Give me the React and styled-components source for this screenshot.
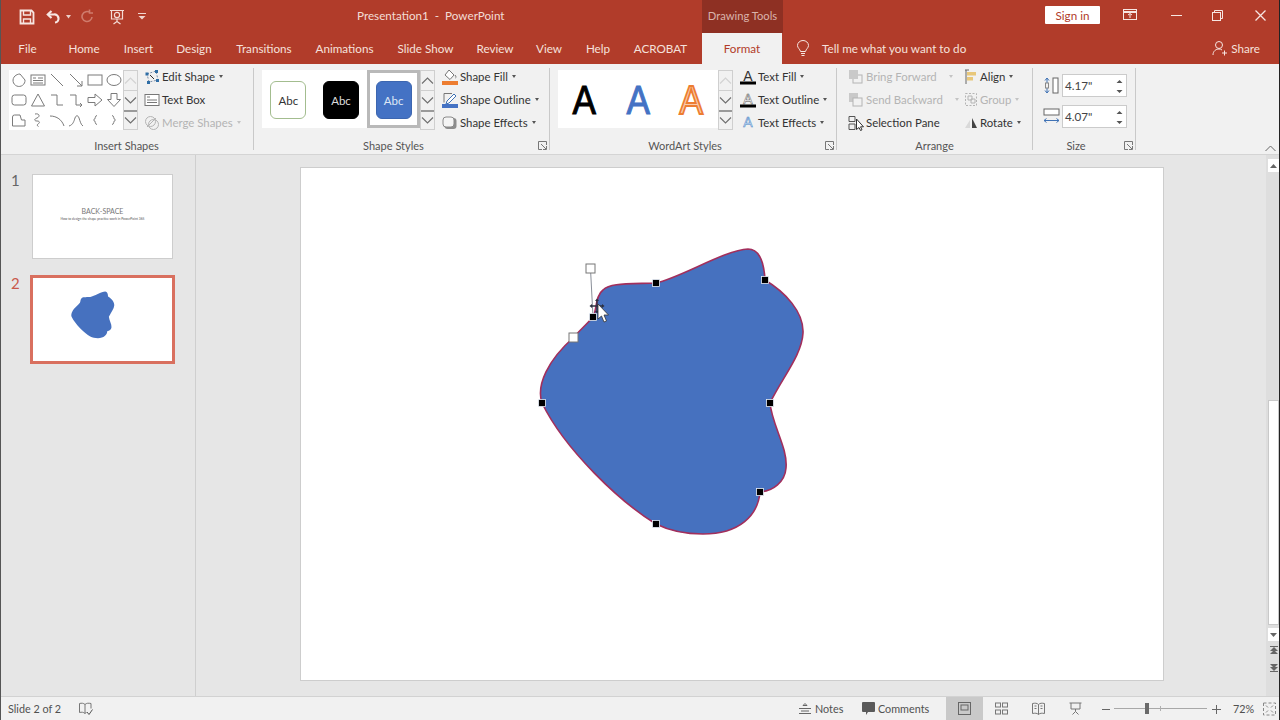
import React from "react";
import styled, { createGlobalStyle } from "styled-components";

const RED = "#B13C2A";
const INK = "#444444";
const FAINT = "#B4B4B4";

const BLOB =
  "M593 317 C597 310 595 296 603 290 C610 283 625 284 656 283 C680 278 725 250 748 249 C760 249 764 262 765 280 C785 292 804 312 803 333 C802 355 782 378 770 403 C772 425 788 448 786 468 C785 482 773 491 760 492 C758 515 740 534 703 534 C685 534 670 531 656 524 C620 502 565 450 542 403 C536 385 548 360 574 337 C580 330 587 324 593 317 Z";

const Global = createGlobalStyle`
  html, body { margin: 0; padding: 0; background: #e6e6e6; }
  * { box-sizing: border-box; }
`;

const Window = styled.div`
  position: relative;
  width: 1280px;
  height: 720px;
  overflow: hidden;
  display: flex;
  flex-direction: column;
  font-family: "Lato", "Open Sans", sans-serif;
  font-size: 11.7px;
  color: ${INK};
  &::after {
    content: "";
    position: absolute;
    inset: 0;
    border-left: 1px solid #555;
    border-right: 1px solid #222;
    pointer-events: none;
  }
`;

const Ico = styled.svg`
  display: block;
  flex: none;
  margin-left: ${(p) => p.$ml || 0}px;
`;

/* title bar */
const TitleBar = styled.div`
  display: flex;
  align-items: stretch;
  height: 33px;
  background: ${RED};
  color: #f3dcd6;
`;

const Quick = styled.div`
  display: flex;
  align-items: center;
  width: 357px;
  padding-left: 19px;
`;

const DocTitle = styled.div`
  width: 345px;
  display: flex;
  align-items: center;
  white-space: pre;
  padding-bottom: 3px;
`;

const ContextLabel = styled.div`
  width: 81px;
  display: flex;
  align-items: center;
  justify-content: center;
  background: #8e3023;
  color: #d9b3ab;
  font-size: 11.2px;
  padding-bottom: 3px;
`;

const SignIn = styled.div`
  align-self: flex-start;
  margin: 6px 0 0 auto;
  width: 55px;
  height: 18px;
  background: #fff;
  color: ${RED};
  display: flex;
  align-items: center;
  justify-content: center;
  border-radius: 1px;
`;

const WinButton = styled.div`
  width: ${(p) => p.$w}px;
  display: flex;
  align-items: center;
  justify-content: center;
  padding-bottom: 3px;
`;

const WinEnd = styled.div`
  width: 2px;
`;

/* tabs */
const TabBar = styled.div`
  display: flex;
  align-items: stretch;
  height: 31px;
  background: ${RED};
  color: #f5e1dc;
`;

const Tab = styled.div`
  width: ${(p) => p.$w}px;
  display: flex;
  align-items: center;
  justify-content: center;
  padding-bottom: 1px;
`;

const ActiveTab = styled(Tab)`
  margin-left: 3px;
  background: #f1f1f1;
  color: ${RED};
`;

const TellMe = styled.div`
  display: flex;
  align-items: center;
  margin-left: 14px;
  gap: 12px;
  padding-bottom: 1px;
`;

const ShareButton = styled.div`
  display: flex;
  align-items: center;
  gap: 3px;
  margin-left: auto;
  padding: 0 20px 1px 0;
`;

/* ribbon */
const Ribbon = styled.div`
  position: relative;
  display: flex;
  height: 91px;
  padding-top: 1px;
  background: #f1f1f1;
  border-bottom: 1px solid #d4d4d4;
`;

const Group = styled.div`
  width: ${(p) => p.$w}px;
  display: flex;
  flex-direction: column;
`;

const GroupBody = styled.div`
  display: flex;
  align-items: flex-start;
  height: 71px;
  flex: none;
  padding-left: ${(p) => p.$pl}px;
`;

const GroupLabel = styled.div`
  position: relative;
  height: 18px;
  flex: none;
  display: flex;
  align-items: center;
  justify-content: center;
  padding-right: ${(p) => (p.$launcher ? 16 : 0)}px;
  font-size: 11px;
  color: #555;
`;

const Launcher = styled.svg`
  position: absolute;
  right: 2px;
  top: 5px;
`;

const Separator = styled.div`
  width: 1px;
  margin: 3px 0 4px;
  background: #c9c9c9;
`;

const Gallery = styled.div`
  width: ${(p) => p.$w}px;
  height: ${(p) => p.$h}px;
  margin-top: 5px;
  background: #fff;
  display: grid;
  grid-template-columns: repeat(${(p) => p.$cols}, 1fr);
  grid-auto-rows: 1fr;
`;

const Cell = styled.div`
  display: flex;
  align-items: center;
  justify-content: center;
`;

const StyleCell = styled(Cell)`
  border: ${(p) => (p.$picked ? "3px solid #b9b9b9" : "none")};
`;

const Swatch = styled.div`
  width: 36px;
  height: 38px;
  border-radius: 6px;
  display: flex;
  align-items: center;
  justify-content: center;
  font-size: 11.500px;
  margin-top: 2px;
  background: ${(p) => p.$bg};
  color: ${(p) => p.$fg};
  border: 1.500px solid ${(p) => p.$line};
`;

const Letter = styled.div`
  font-family: "Liberation Sans", sans-serif;
  font-size: 40px;
  line-height: 1;
  margin-top: 2px;
  transform: scaleX(0.88);
  color: ${(p) => p.$fill};
  -webkit-text-stroke: ${(p) => p.$stroke || "1px currentColor"};
`;

const Spinner = styled.div`
  width: 15px;
  height: 60px;
  margin-top: 5px;
  display: grid;
  grid-auto-rows: 1fr;
  border: 1px solid #cfcfcf;
  background: #f1f1f1;
`;

const SpinCell = styled.div`
  display: flex;
  align-items: center;
  justify-content: center;
  border-top: ${(p) => (p.$rule ? "2px solid #9a9a9a" : p.$split ? "1px solid #cfcfcf" : "none")};
`;

const Commands = styled.div`
  display: flex;
  flex-direction: column;
  width: ${(p) => (p.$w ? `${p.$w}px` : "auto")};
  margin-left: ${(p) => p.$ml || 0}px;
`;

const Command = styled.div`
  display: flex;
  align-items: center;
  height: 23px;
  gap: 2px;
  font-size: 11.4px;
  white-space: nowrap;
  color: ${(p) => (p.$off ? FAINT : "#333")};
`;

const Caret = styled.span`
  width: 0;
  height: 0;
  margin-left: ${(p) => p.$ml || 2}px;
  border-left: 2.500px solid transparent;
  border-right: 2.500px solid transparent;
  border-top: 3px solid ${(p) => (p.$off ? "#c4c4c4" : "#555")};
`;

const SizeRows = styled.div`
  display: flex;
  flex-direction: column;
  gap: 8px;
  margin-top: 9px;
`;

const SizeRow = styled.div`
  display: flex;
  align-items: center;
  gap: 2px;
`;

const SizeInput = styled.div`
  position: relative;
  width: 65px;
  height: 23px;
  border: 1px solid #cbcbcb;
  background: #fff;
  display: flex;
  align-items: center;
  padding: 0 0 1px 2px;
`;

const SpinButtons = styled.svg`
  position: absolute;
  right: 3px;
  top: 5px;
`;

const Collapse = styled.svg`
  position: absolute;
  right: 4px;
  bottom: 2px;
`;

/* slides */
const Body = styled.div`
  flex: 1;
  min-height: 0;
  display: flex;
  background: #e6e6e6;
`;

const Thumbs = styled.div`
  width: 196px;
  padding-top: 20px;
  border-right: 1px solid #cfcfcf;
  display: flex;
  flex-direction: column;
  gap: 20px;
`;

const ThumbRow = styled.div`
  display: flex;
  padding-left: 11px;
`;

const ThumbNumber = styled.div`
  width: 22px;
  font-size: 15px;
  line-height: 10px;
  color: ${(p) => (p.$on ? "#c9584b" : "#666")};
`;

const Thumb = styled.div`
  position: relative;
  width: 139px;
  height: 83px;
  background: #fff;
  outline: ${(p) => (p.$on ? "3px solid #d9705f" : "1px solid #cdcdcd")};
  display: flex;
  flex-direction: column;
  align-items: center;
  padding-top: 32px;
`;

const ThumbTitle = styled.div`
  font-size: 7px;
  line-height: 9px;
  color: #777;
`;

const ThumbSub = styled.div`
  font-size: 3.300px;
  line-height: 6px;
  color: #555;
  white-space: nowrap;
`;

const ThumbArt = styled.svg`
  position: absolute;
  inset: 0;
  width: 100%;
  height: 100%;
`;

const Workspace = styled.div`
  flex: 1;
  display: flex;
  justify-content: center;
  padding: 13px 0 0 2px;
`;

const Slide = styled.div`
  width: 862px;
  height: 512px;
  background: #fff;
  outline: 1px solid #cdcdcd;
`;

const SlideArt = styled.svg`
  display: block;
  width: 100%;
  height: 100%;
`;

const ScrollBar = styled.div`
  width: 14px;
  padding: 4px 1px 0 2px;
  display: flex;
  flex-direction: column;
  background: #dedede;
`;

const ScrollEnd = styled.div`
  height: ${(p) => p.$h}px;
  background: ${(p) => (p.$plain ? "transparent" : "#fff")};
  display: flex;
  align-items: center;
  justify-content: center;
  flex: none;
`;

const ScrollTrack = styled.div`
  flex: none;
  height: 456px;
  display: flex;
  flex-direction: column;
  justify-content: flex-end;
  padding-bottom: 3px;
`;

const ScrollThumb = styled.div`
  height: 225px;
  background: #fff;
  border: 1px solid #c9c9c9;
`;

/* status bar */
const StatusBar = styled.div`
  display: flex;
  align-items: center;
  height: 24px;
  background: #f1f1f1;
  border-top: 1px solid #d2d2d2;
  padding-left: 8px;
  font-size: 10.8px;
  color: #505050;
`;

const StatusRight = styled.div`
  display: flex;
  align-items: stretch;
  height: 100%;
  margin-left: auto;
  width: 481px;
`;

const StatusItem = styled.div`
  display: flex;
  align-items: center;
  flex: none;
  white-space: nowrap;
  gap: ${(p) => p.$gap || 4}px;
  width: ${(p) => p.$w}px;
  margin-left: ${(p) => p.$ml || 0}px;
`;

const ViewButton = styled.div`
  width: 37px;
  margin-left: ${(p) => p.$ml || 0}px;
  display: flex;
  align-items: center;
  justify-content: center;
  background: ${(p) => (p.$on ? "#c9c9c9" : "transparent")};
`;

const Zoomer = styled.div`
  position: relative;
  width: 93px;
  margin-left: 4px;
  align-self: center;
  height: 1px;
  background: #a8a8a8;
`;

const ZoomThumb = styled.div`
  position: absolute;
  left: 31px;
  top: -5px;
  width: 4px;
  height: 11px;
  background: #6a6a6a;
`;

const ZoomTick = styled.div`
  position: absolute;
  left: 46px;
  top: -2px;
  width: 1px;
  height: 5px;
  background: #b0b0b0;
`;

const Svg = ({ w = 16, h = 16, children, ...rest }) => (
  <Ico width={w} height={h} viewBox={`0 0 ${w} ${h}`} fill="none" {...rest}>
    {children}
  </Ico>
);

const Chevron = ({ up, off }) => (
  <Svg w={13} h={9}>
    <polyline
      points={up ? "1,7.500 6.500,2 12,7.500" : "1,1.500 6.500,7 12,1.500"}
      stroke={off ? "#d2d2d2" : "#6e6e6e"}
      strokeWidth="1.100"
    />
  </Svg>
);

const GalleryScroll = ({ off }) => (
  <Spinner>
    <SpinCell><Chevron up off={off} /></SpinCell>
    <SpinCell $split><Chevron /></SpinCell>
    <SpinCell $rule><Chevron /></SpinCell>
  </Spinner>
);

const DialogLauncher = () => (
  <Launcher width="9" height="9" viewBox="0 0 9 9" fill="none" stroke="#777">
    <path d="M8.500 4V.5H.5v8H4" />
    <path d="M3 3l5 5M8.500 5v3.500H5" />
  </Launcher>
);

const GL = "#7b7b7b";
const shapeGlyphs = [
  <path d="M9 2l5 6a6 6 0 1 1-10-4c1-1 3-2 5-2z" />,
  <g><rect x="1" y="3" width="14" height="10" /><path d="M3 6h3M8 6h5M3 8.500h10M3 11h10" /></g>,
  <path d="M2 2l12 12" />,
  <path d="M2 2l12 12M14 9v5H9" />,
  <rect x="1" y="3" width="14" height="10" />,
  <ellipse cx="8" cy="8" rx="7" ry="5.500" />,
  <rect x="1" y="3" width="14" height="10" rx="2.500" />,
  <path d="M8 2l6.500 12h-13z" />,
  <path d="M2 3h6v10h6" />,
  <path d="M2 3h6v10h6M12 11l2 2-2 2" />,
  <path d="M1 5.500h7V2l7 6-7 6v-3.500H1z" />,
  <path d="M5 1.500h6v6h3.500L8 14.500 1.500 7.500H5z" />,
  <path d="M1.500 14V5q0-2 2-2H9l1.500 5H14v6z" />,
  <path d="M5 2c5-1 5 3 2 4-3 1-3 3 0 3 3 0 3 2 1 3-1 .5-1 2 .5 2.500" />,
  <path d="M1 4c7 0 12 4 14 10" />,
  <path d="M1 14c4-1 5-5 6-8s3-3 4 0 2 7 4 8" />,
  <path d="M10 3.500C7.500 3.500 9 7.500 6.500 8c2.500.5 1 4.500 3.500 4.500" />,
  <path d="M6 3.500c2.500 0 1 4 3.500 4.500-2.500.5-1 4.500-3.500 4.500" />,
];

const EditShapeIcon = () => (
  <Svg>
    <path d="M3 5L12 2l2 9-9 2z" stroke="#7a8ea8" strokeDasharray="2 1.500" />
    <g fill="#2f6ea6">
      <rect x="1.500" y="3.500" width="3" height="3" />
      <rect x="11" y="1" width="3" height="3" />
      <rect x="12" y="10" width="3" height="3" />
      <rect x="3" y="12" width="3" height="3" />
    </g>
    <path d="M6 6l4 4" stroke="#333" />
  </Svg>
);

const TextBoxIcon = () => (
  <Svg>
    <rect x="1" y="2.500" width="14" height="11" stroke="#777" fill="#fff" />
    <path d="M3 5h3M3 8h10M3 10.500h10" stroke="#777" />
  </Svg>
);

const MergeIcon = () => (
  <Svg>
    <circle cx="6.500" cy="6.500" r="5" stroke={FAINT} />
    <circle cx="9.500" cy="9.500" r="5" stroke={FAINT} />
    <path d="M3 12L12 3" stroke={FAINT} />
  </Svg>
);

const FillIcon = () => (
  <Svg>
    <path d="M7 1l5 5-4 4.500-5-4.500z" fill="#fff" stroke="#777" />
    <path d="M13 6c1 1.500 1.500 2.500.5 3" stroke="#777" />
    <rect x="0" y="12" width="16" height="4" fill="#ed7d31" />
  </Svg>
);

const OutlineIcon = () => (
  <Svg>
    <path d="M2 1.500h8M2 1.500v9" stroke="#777" />
    <path d="M5 9L12 2l2 2-7 7-3 1z" fill="#fff" stroke="#3f72b5" />
    <rect x="0" y="12" width="16" height="4" fill="#4472c4" />
  </Svg>
);

const EffectsIcon = () => (
  <Svg>
    <rect x="2.500" y="3" width="12" height="11" rx="3" fill="#8d8d8d" />
    <rect x="1" y="2" width="11" height="10" rx="3" fill="#f4f4f4" stroke="#8a8a8a" />
  </Svg>
);

const LetterIcon = ({ bar, stroke, fill = "#333" }) => (
  <Svg>
    <text x="8" y="11.500" textAnchor="middle" fontFamily="Liberation Sans" fontSize="14" fill={fill} stroke={stroke} strokeWidth={stroke ? 0.5 : 0}>
      A
    </text>
    {bar && <rect x="0" y="12.500" width="16" height="3" fill="#000" />}
  </Svg>
);

const ForwardIcon = () => (
  <Svg>
    <rect x="5" y="6" width="9" height="8" stroke={FAINT} />
    <rect x="1" y="1" width="9" height="9" fill="#c9c9c9" />
  </Svg>
);

const BackwardIcon = () => (
  <Svg>
    <rect x="1" y="1" width="9" height="9" fill="#c9c9c9" />
    <rect x="5" y="6" width="9" height="8" fill="#f1f1f1" stroke={FAINT} />
  </Svg>
);

const PaneIcon = () => (
  <Svg>
    <path d="M1 1.500h6v5H1zM1 9h6v5.500H1z" stroke="#555" />
    <path d="M8.500 4v10.500l2.500-2 1.500 3 1.500-.7-1.500-3h3z" fill="#fff" stroke="#333" />
  </Svg>
);

const AlignIcon = () => (
  <Svg w={14}>
    <path d="M2 1v14" stroke="#666" />
    <rect x="3" y="3" width="9" height="3.500" fill="#e8c77a" />
    <rect x="3" y="8" width="6" height="3.500" fill="#e8c77a" />
    <path d="M1 1h4" stroke="#666" />
  </Svg>
);

const GroupIcon = () => (
  <Svg w={14}>
    <rect x="1.500" y="1.500" width="11" height="12" stroke={FAINT} strokeDasharray="2 1.500" />
    <path d="M4 4h4v4H4zM7 7h4v4H7z" stroke={FAINT} />
  </Svg>
);

const RotateIcon = () => (
  <Svg w={14}>
    <path d="M1 13L6 5v8z" fill="#d9d9d9" />
    <path d="M13 13L8 3v10z" fill="#444" />
  </Svg>
);

const HeightIcon = () => (
  <Svg w={17} h={17}>
    <path d="M4 1v15M2 3.500L4 1l2 2.500M2 13.500L4 16l2-2.500" stroke="#3f72b5" />
    <rect x="2.500" y="6" width="3" height="5" fill="#f1f1f1" stroke="#888" />
    <rect x="10" y="1" width="5" height="15" fill="#fff" stroke="#666" />
  </Svg>
);

const WidthIcon = () => (
  <Svg w={17} h={17}>
    <rect x="1" y="1" width="15" height="6" fill="#fff" stroke="#666" />
    <path d="M1 12.500h15M3.500 10.500L1 12.500l2.500 2M13.500 10.500l2.500 2-2.500 2" stroke="#3f72b5" />
  </Svg>
);

const SpinPair = () => (
  <SpinButtons width="7" height="13" viewBox="0 0 7 13" fill="#555">
    <path d="M3.500 0l3 3h-6zM3.500 13l3-3h-6z" />
  </SpinButtons>
);

export default function App() {
  return (
    <Window>
      <Global />
      <TitleBar>
        <Quick>
          <Svg stroke="#f7e6e2" strokeWidth="1.800">
            <path d="M1.500 1.500h11l2 2v11h-13z" />
            <path d="M4.500 2v4h7V2M4.500 14.500V10h7v4.500" strokeWidth="1.400" />
          </Svg>
          <Svg $ml={11} w={14} stroke="#f7e6e2" strokeWidth="2.200">
            <path d="M5.500 2L1.800 5.500 5.500 9" />
            <path d="M2 5.500h6a4 4 0 0 1 1 8" />
          </Svg>
          <Svg $ml={6} w={5} h={4}><path d="M0 0h5L2.500 3.500z" fill="#eccfc8" /></Svg>
          <Svg $ml={10} w={12} stroke="#cf7b6c" strokeWidth="1.600">
            <path d="M9 3.500A5 5 0 1 0 11 8M8.500 0.500v3.500H12" />
          </Svg>
          <Svg $ml={16} stroke="#f4dcd6" strokeWidth="1.200">
            <path d="M1 1.500h14M2.500 1.500v8.500h11V1.500M8 10v2.500M4.500 15l3.500-2.500 3.500 2.500" />
            <circle cx="8" cy="6" r="2.600" />
          </Svg>
          <Svg $ml={13} w={8} h={7}>
            <path d="M0 .5h8" stroke="#f1d5ce" />
            <path d="M.5 3h7L4 6.500z" fill="#f1d5ce" />
          </Svg>
        </Quick>
        <DocTitle>Presentation1  -  PowerPoint</DocTitle>
        <ContextLabel>Drawing Tools</ContextLabel>
        <SignIn>Sign in</SignIn>
        <WinButton $w={60}>
          <Svg w={14} h={12} stroke="#f7e6e2">
            <rect x=".5" y=".5" width="13" height="10" />
            <path d="M.5 3h13" strokeWidth="2" />
            <path d="M5 6l2-1.500L9 6M7 5v4" />
          </Svg>
        </WinButton>
        <WinButton $w={32}>
          <Svg w={11} h={3}><path d="M0 1.500h11" stroke="#f7e6e2" /></Svg>
        </WinButton>
        <WinButton $w={50}>
          <Svg w={11} h={11} stroke="#f7e6e2">
            <rect x=".5" y="2.500" width="8" height="8" />
            <path d="M2.500 2.500v-2h8v8h-2" />
          </Svg>
        </WinButton>
        <WinButton $w={36}>
          <Svg w={11} h={11}><path d="M.5.5l10 10M10.500.5l-10 10" stroke="#f7e6e2" strokeWidth="1.300" /></Svg>
        </WinButton>
        <WinEnd />
      </TitleBar>

      <TabBar>
        <Tab $w={55}>File</Tab>
        <Tab $w={58}>Home</Tab>
        <Tab $w={51}>Insert</Tab>
        <Tab $w={60}>Design</Tab>
        <Tab $w={80}>Transitions</Tab>
        <Tab $w={81}>Animations</Tab>
        <Tab $w={81}>Slide Show</Tab>
        <Tab $w={58}>Review</Tab>
        <Tab $w={50}>View</Tab>
        <Tab $w={48}>Help</Tab>
        <Tab $w={77}>ACROBAT</Tab>
        <ActiveTab $w={80}>Format</ActiveTab>
        <TellMe>
          <Svg w={14} h={17} stroke="#f7e6e2">
            <path d="M4.500 11.500C4 9 1.500 8 1.500 5.500a5.500 5 0 0 1 11 0C12.500 8 10 9 9.500 11.500z" />
            <path d="M5 13.500h4M5.500 15.500h3" />
          </Svg>
          <span>Tell me what you want to do</span>
        </TellMe>
        <ShareButton>
          <Svg stroke="#f7e6e2">
            <circle cx="7" cy="5" r="3.500" />
            <path d="M1 15c0-4 3-6 6-6 1 0 2 .2 3 1M10 13h5M12.500 10.500v5" />
          </Svg>
          <span>Share</span>
        </ShareButton>
      </TabBar>

      <Ribbon>
        <Group $w={253}>
          <GroupBody $pl={9}>
            <Gallery $w={114} $h={60} $cols={6}>
              {shapeGlyphs.map((glyph, i) => (
                <Cell key={i}>
                  <Svg stroke={GL}>{glyph}</Svg>
                </Cell>
              ))}
            </Gallery>
            <GalleryScroll off />
            <Commands $ml={6}>
              <Command><EditShapeIcon />Edit Shape<Caret /></Command>
              <Command><TextBoxIcon />Text Box</Command>
              <Command $off><MergeIcon />Merge Shapes<Caret $off /></Command>
            </Commands>
          </GroupBody>
          <GroupLabel>Insert Shapes</GroupLabel>
        </Group>
        <Separator />

        <Group $w={295}>
          <GroupBody $pl={8}>
            <Gallery $w={158} $h={58} $cols={3}>
              <StyleCell><Swatch $bg="#fff" $fg="#333" $line="#a3bd8f">Abc</Swatch></StyleCell>
              <StyleCell><Swatch $bg="#000" $fg="#ddd" $line="#000">Abc</Swatch></StyleCell>
              <StyleCell $picked><Swatch $bg="#4472c4" $fg="#dfe7f5" $line="#3c66b0">Abc</Swatch></StyleCell>
            </Gallery>
            <GalleryScroll />
            <Commands $ml={7}>
              <Command><FillIcon />Shape Fill<Caret /></Command>
              <Command><OutlineIcon />Shape Outline<Caret /></Command>
              <Command><EffectsIcon />Shape Effects<Caret /></Command>
            </Commands>
          </GroupBody>
          <GroupLabel $launcher>Shape Styles<DialogLauncher /></GroupLabel>
        </Group>
        <Separator />

        <Group $w={286}>
          <GroupBody $pl={8}>
            <Gallery $w={160} $h={58} $cols={3}>
              <Cell><Letter $fill="#000">A</Letter></Cell>
              <Cell><Letter $fill="#4472c4">A</Letter></Cell>
              <Cell><Letter $fill="#f8cbad" $stroke="2px #ed7d31">A</Letter></Cell>
            </Gallery>
            <GalleryScroll off />
            <Commands $ml={7}>
              <Command><LetterIcon bar />Text Fill<Caret /></Command>
              <Command><LetterIcon bar fill="#fff" stroke="#555" />Text Outline<Caret /></Command>
              <Command><LetterIcon fill="#bcd8f2" stroke="#4f86c6" />Text Effects<Caret /></Command>
            </Commands>
          </GroupBody>
          <GroupLabel $launcher>WordArt Styles<DialogLauncher /></GroupLabel>
        </Group>
        <Separator />

        <Group $w={195}>
          <GroupBody $pl={11}>
            <Commands $w={116}>
              <Command $off><ForwardIcon />Bring Forward<Caret $off $ml={10} /></Command>
              <Command $off><BackwardIcon />Send Backward<Caret $off $ml={10} /></Command>
              <Command><PaneIcon />Selection Pane</Command>
            </Commands>
            <Commands>
              <Command><AlignIcon />Align<Caret /></Command>
              <Command $off><GroupIcon />Group<Caret $off /></Command>
              <Command><RotateIcon />Rotate<Caret /></Command>
            </Commands>
          </GroupBody>
          <GroupLabel>Arrange</GroupLabel>
        </Group>
        <Separator />

        <Group $w={102}>
          <GroupBody $pl={10}>
            <SizeRows>
              <SizeRow><HeightIcon /><SizeInput>4.17"<SpinPair /></SizeInput></SizeRow>
              <SizeRow><WidthIcon /><SizeInput>4.07"<SpinPair /></SizeInput></SizeRow>
            </SizeRows>
          </GroupBody>
          <GroupLabel $launcher>Size<DialogLauncher /></GroupLabel>
        </Group>
        <Separator />

        <Collapse width="11" height="7" viewBox="0 0 11 7" fill="none" stroke="#666">
          <path d="M.5 6l5-5 5 5" />
        </Collapse>
      </Ribbon>

      <Body>
        <Thumbs>
          <ThumbRow>
            <ThumbNumber>1</ThumbNumber>
            <Thumb>
              <ThumbTitle>BACK-SPACE</ThumbTitle>
              <ThumbSub>How to design the shape practice work in PowerPoint 365</ThumbSub>
            </Thumb>
          </ThumbRow>
          <ThumbRow>
            <ThumbNumber $on>2</ThumbNumber>
            <Thumb $on>
              <ThumbArt viewBox="306 167 850 506">
                <path d={BLOB} fill="#4671bf" />
              </ThumbArt>
            </Thumb>
          </ThumbRow>
        </Thumbs>

        <Workspace>
          <Slide>
            <SlideArt viewBox="301 168 862 512">
              <path d={BLOB} fill="#4671bf" stroke="#a22f5c" strokeWidth="1.600" />
              <path d="M590.500 269L593 317" stroke="#8a8f99" />
              {[[656, 283], [765, 280], [770, 403], [760, 492], [656, 524], [542, 403], [593, 317]].map(([x, y]) => (
                <rect key={`${x}-${y}`} x={x - 3.500} y={y - 3.500} width="7" height="7" fill="#000" stroke="#e8eef8" strokeWidth="0.800" />
              ))}
              {[[590.500, 268.500], [573.500, 337.500]].map(([x, y]) => (
                <rect key={x} x={x - 4.500} y={y - 4.500} width="9" height="9" fill="#fff" stroke="#777" />
              ))}
              <g stroke="#2c3040" strokeWidth="1.300">
                <path d="M591 306h12M597 300v12" />
              </g>
              <path d="M597 298.500l2 2.500h-4zM597 313.500l2-2.500h-4zM589.500 306l2.500-2v4zM604.500 306l-2.500-2v4z" fill="#2c3040" />
              <path d="M598 304v15l3.500-3 2.500 6 2.500-1-2.500-6h4.500z" fill="#fff" stroke="#333" strokeWidth="0.800" />
            </SlideArt>
          </Slide>
        </Workspace>

        <ScrollBar>
          <ScrollEnd $h={13}><Svg w={7} h={4}><path d="M3.500 0l3.500 4H0z" fill="#666" /></Svg></ScrollEnd>
          <ScrollTrack><ScrollThumb /></ScrollTrack>
          <ScrollEnd $h={13}><Svg w={7} h={4}><path d="M3.500 4L7 0H0z" fill="#666" /></Svg></ScrollEnd>
          <ScrollEnd $plain $h={19}>
            <Svg w={8} h={9}><path d="M0 0h8v1H0zM4 1l4 4H0zM4 4l4 4H0z" fill="#666" /></Svg>
          </ScrollEnd>
          <ScrollEnd $plain $h={15}>
            <Svg w={8} h={9}><path d="M0 8h8v1H0zM4 8L8 4H0zM4 5L8 1H0z" fill="#666" /></Svg>
          </ScrollEnd>
        </ScrollBar>
      </Body>

      <StatusBar>
        <StatusItem $w={53}>Slide 2 of 2</StatusItem>
        <Svg $ml={18} w={14} h={14} stroke="#777">
          <path d="M6 2.500C4.500 1 2.500 1 .5 1.500v9c2-.5 4-.5 5.500 1 .5-.5 1-.8 1.500-1M6 2.500c1.500-1.500 3.500-1.500 6-1v5M6 2.500v9" />
          <path d="M8 10l2 2.500 3.500-5" stroke="#555" />
        </Svg>
        <StatusRight>
          <StatusItem $w={53}>
            <Svg w={12} h={12} stroke="#666">
              <path d="M6 0.500L4 2.500h4zM0 5.500h12M2 8h8M0 10.500h12" />
            </Svg>
            Notes
          </StatusItem>
          <StatusItem $w={68} $ml={10} $gap={3}>
            <Svg w={13} h={13}>
              <path d="M1 0h11a1 1 0 0 1 1 1v8a1 1 0 0 1-1 1H6l-2 3v-3H1a1 1 0 0 1-1-1V1a1 1 0 0 1 1-1z" fill="#5a5a5a" />
            </Svg>
            Comments
          </StatusItem>
          <ViewButton $on $ml={16}>
            <Svg w={13} h={13} stroke="#666">
              <rect x=".5" y=".5" width="12" height="12" />
              <rect x="3" y="3" width="7" height="5" />
            </Svg>
          </ViewButton>
          <ViewButton>
            <Svg w={13} h={13} stroke="#777">
              <rect x=".5" y="1" width="5" height="4" />
              <rect x="7.500" y="1" width="5" height="4" />
              <rect x=".5" y="8" width="5" height="4" />
              <rect x="7.500" y="8" width="5" height="4" />
            </Svg>
          </ViewButton>
          <ViewButton>
            <Svg w={13} h={13} stroke="#777">
              <path d="M6.500 2.500C5 1 3 1 .5 1.500v10c2.500-.5 4.500-.5 6 1 1.500-1.500 3.500-1.500 6-1v-10c-2.500-.5-4.500-.5-6 1zM6.500 2.500v10M2.500 4h2M2.500 6.500h2M8.500 4h2M8.500 6.500h2" />
            </Svg>
          </ViewButton>
          <ViewButton>
            <Svg w={13} h={13} stroke="#777">
              <path d="M.5 1h12M2 1v6h9V1M6.500 7v2.500M3.500 12.500l3-3 3 3" />
            </Svg>
          </ViewButton>
          <Svg $ml={8} w={8} h={24}><path d="M0 12.500h8" stroke="#666" /></Svg>
          <Zoomer>
            <ZoomThumb />
            <ZoomTick />
          </Zoomer>
          <Svg $ml={5} w={9} h={24}><path d="M0 12.500h9M4.500 8v9" stroke="#666" /></Svg>
          <StatusItem $w={24} $ml={12}>72%</StatusItem>
          <Svg $ml={6} w={13} h={24} stroke="#888">
            <rect x=".5" y="6" width="12" height="12" strokeDasharray="3 2" />
            <path d="M3 8.500l2 2M10 8.500l-2 2M3 15.500l2-2M10 15.500l-2-2" />
          </Svg>
        </StatusRight>
      </StatusBar>
    </Window>
  );
}
